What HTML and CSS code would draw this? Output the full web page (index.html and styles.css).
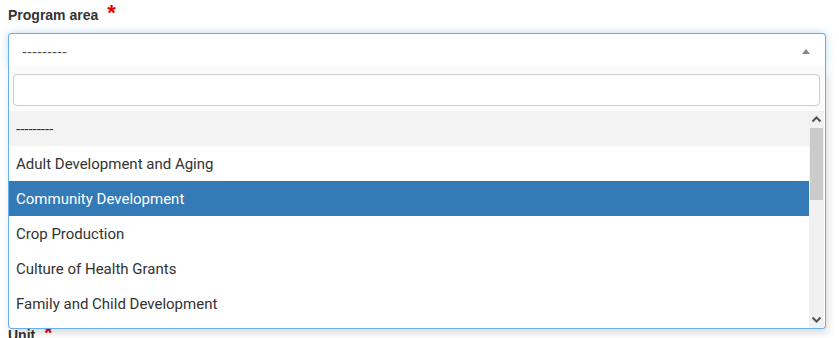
FILE: index.html
```html
<!DOCTYPE html>
<html lang="en">
<head>
    <meta charset="UTF-8">
    <meta name="viewport" content="width=device-width, initial-scale=1.0">
    <title>Program area</title>
    <link rel="stylesheet" href="styles.css">
</head>
<body>
    <form class="form">
        <div class="form-group program-group">
            <label class="label">Program area <span class="req">*</span></label>
            <div class="select open">
                <div class="select-current">
                    <span class="select-text">---------</span>
                    <span class="select-arrow"></span>
                </div>
                <div class="dropdown">
                    <div class="search">
                        <input type="text" class="search-input">
                    </div>
                    <div class="list-wrap">
                        <ul class="options">
                            <li class="option hover">---------</li>
                            <li class="option">Adult Development and Aging</li>
                            <li class="option selected">Community Development</li>
                            <li class="option">Crop Production</li>
                            <li class="option">Culture of Health Grants</li>
                            <li class="option">Family and Child Development</li>
                            <li class="option">Farm Management</li>
                            <li class="option">Food Safety</li>
                            <li class="option">Forestry and Wildlife</li>
                        </ul>
                        <div class="scrollbar">
                            <svg class="sb-btn" width="15" height="17" viewBox="0 0 15 17">
                                <path d="M3.5 10.5 L7.5 6.5 L11.5 10.5" fill="none" stroke="#505050" stroke-width="2"/>
                            </svg>
                            <div class="sb-track">
                                <div class="sb-thumb"></div>
                            </div>
                            <svg class="sb-btn" width="15" height="17" viewBox="0 0 15 17">
                                <path d="M3.5 6.5 L7.5 10.5 L11.5 6.5" fill="none" stroke="#505050" stroke-width="2"/>
                            </svg>
                        </div>
                    </div>
                </div>
            </div>
        </div>
        <div class="form-group">
            <label class="label">Unit <span class="req">*</span></label>
        </div>
    </form>
</body>
</html>
```

FILE: styles.css
```css
* { margin: 0; padding: 0; box-sizing: border-box; }
body { background: #fff; font-family: Roboto, "Liberation Sans", sans-serif; color: #333; padding: 5px 8px; }

.form { width: 818px; }
.form-group { display: flex; flex-direction: column; }
.program-group { height: 320px; }

.label {
    font-family: "Liberation Sans", Arial, sans-serif;
    font-size: 14px;
    font-weight: bold;
    line-height: 20px;
    margin-bottom: 8px;
    color: #333;
}
.req {
    color: #e00000;
    font-size: 22px;
    line-height: 14px;
    margin-left: 5px;
}

.select {
    position: relative;
    width: 818px;
}
.select-current {
    display: flex;
    align-items: center;
    justify-content: space-between;
    height: 35px;
    padding: 1px 15px 0 13px;
    border: 1px solid #66afe9;
    border-bottom: none;
    border-radius: 4px 4px 0 0;
    background: #fff;
    box-shadow: 0 0 8px rgba(102, 175, 233, 0.45);
}
.select-text {
    font-family: "Liberation Sans", Arial, sans-serif;
    font-size: 15px;
    color: #555;
}
.select-arrow {
    width: 0;
    height: 0;
    border-left: 4px solid transparent;
    border-right: 4px solid transparent;
    border-bottom: 5px solid #888;
}

/* opened list, drawn over the next fields */
.dropdown {
    position: absolute;
    top: 35px;
    left: 0;
    width: 818px;
    background: #fff;
    border: 1px solid #66afe9;
    border-top: none;
    border-radius: 0 0 4px 4px;
    box-shadow: 2px 4px 8px rgba(0, 0, 0, 0.15);
    z-index: 10;
}
.search {
    padding: 6px 5px 5px 4px;
    background: #fbfbfb;
}
.search-input {
    display: block;
    width: 100%;
    height: 32px;
    border: 1px solid #ccc;
    border-radius: 4px;
    background: #fff;
    font: 15px Roboto, sans-serif;
    outline: none;
}
.list-wrap {
    display: flex;
    height: 217px;
}
.options {
    flex: 1;
    list-style: none;
    overflow: hidden;
}
.option {
    font-size: 15px;
    line-height: 19px;
    padding: 9px 7px 7px;
    color: #333;
}
.option.hover { background: #f3f3f3; }
.option.selected { background: #337ab7; color: #fff; }

.scrollbar {
    width: 15px;
    margin-right: 1px;
    display: flex;
    flex-direction: column;
    background: #f1f1f1;
}
.sb-btn { display: block; flex: none; }
.sb-track { flex: 1; }
.sb-thumb {
    height: 72px;
    margin: 0 1px;
    background: #cbcbcb;
}
```
